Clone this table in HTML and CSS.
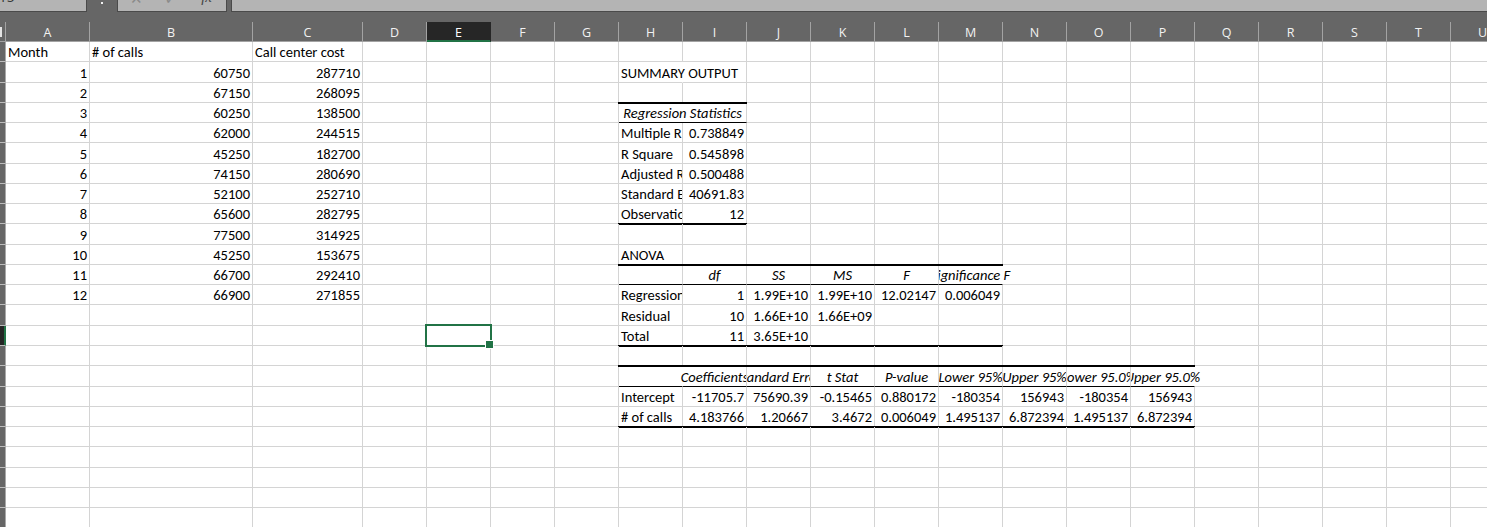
FILE: index.html
```html
<!DOCTYPE html>
<html lang="en">
<head>
<meta charset="utf-8">
<title>Regression output</title>
<link rel="stylesheet" href="styles.css">
</head>
<body>
<div class="bar">
  <div class="namebox"><span>E15</span></div>
  <div class="dots"><span></span></div>
  <div class="fxbox"><span class="ic x">✕</span><span class="ic ok">✓</span><span class="ic fx">fx</span></div>
  <div class="sep"></div>
  <div class="formula"></div>
</div>
<div class="gap"></div>
<div class="hdr">
  <div class="corner"><span></span></div>
  <div>A</div><div>B</div><div>C</div><div>D</div><div class="on">E</div><div>F</div><div>G</div><div>H</div><div>I</div><div>J</div><div>K</div><div>L</div><div>M</div><div>N</div><div>O</div><div>P</div><div>Q</div><div>R</div><div>S</div><div>T</div><div>U</div>
</div>
<div class="sheet">
  <div class="r"><div class="rh"></div><div><span>Month</span></div><div><span># of calls</span></div><div><span>Call center cost</span></div><div></div><div></div><div></div><div></div><div></div><div></div><div></div><div></div><div></div><div></div><div></div><div></div><div></div><div></div><div></div><div></div><div></div><div></div></div>
  <div class="r"><div class="rh"></div><div><span class="n">1</span></div><div><span class="n">60750</span></div><div><span class="n">287710</span></div><div></div><div></div><div></div><div></div><div class="nb"><span class="sr">SUMMARY OUTPUT</span></div><div></div><div></div><div></div><div></div><div></div><div></div><div></div><div></div><div></div><div></div><div></div><div></div><div></div></div>
  <div class="r"><div class="rh"></div><div><span class="n">2</span></div><div><span class="n">67150</span></div><div><span class="n">268095</span></div><div></div><div></div><div></div><div></div><div></div><div></div><div></div><div></div><div></div><div></div><div></div><div></div><div></div><div></div><div></div><div></div><div></div><div></div></div>
  <div class="r"><div class="rh"></div><div><span class="n">3</span></div><div><span class="n">60250</span></div><div><span class="n">138500</span></div><div></div><div></div><div></div><div></div><div class="span2 tt bb"><span class="m i">Regression Statistics</span></div><div></div><div></div><div></div><div></div><div></div><div></div><div></div><div></div><div></div><div></div><div></div><div></div></div>
  <div class="r"><div class="rh"></div><div><span class="n">4</span></div><div><span class="n">62000</span></div><div><span class="n">244515</span></div><div></div><div></div><div></div><div></div><div><span>Multiple R</span></div><div><span class="n">0.738849</span></div><div></div><div></div><div></div><div></div><div></div><div></div><div></div><div></div><div></div><div></div><div></div><div></div></div>
  <div class="r"><div class="rh"></div><div><span class="n">5</span></div><div><span class="n">45250</span></div><div><span class="n">182700</span></div><div></div><div></div><div></div><div></div><div><span>R Square</span></div><div><span class="n">0.545898</span></div><div></div><div></div><div></div><div></div><div></div><div></div><div></div><div></div><div></div><div></div><div></div><div></div></div>
  <div class="r"><div class="rh"></div><div><span class="n">6</span></div><div><span class="n">74150</span></div><div><span class="n">280690</span></div><div></div><div></div><div></div><div></div><div><span>Adjusted R Square</span></div><div><span class="n">0.500488</span></div><div></div><div></div><div></div><div></div><div></div><div></div><div></div><div></div><div></div><div></div><div></div><div></div></div>
  <div class="r"><div class="rh"></div><div><span class="n">7</span></div><div><span class="n">52100</span></div><div><span class="n">252710</span></div><div></div><div></div><div></div><div></div><div><span>Standard Error</span></div><div><span class="n">40691.83</span></div><div></div><div></div><div></div><div></div><div></div><div></div><div></div><div></div><div></div><div></div><div></div><div></div></div>
  <div class="r"><div class="rh"></div><div><span class="n">8</span></div><div><span class="n">65600</span></div><div><span class="n">282795</span></div><div></div><div></div><div></div><div></div><div class="tb"><span>Observations</span></div><div class="tb"><span class="n">12</span></div><div></div><div></div><div></div><div></div><div></div><div></div><div></div><div></div><div></div><div></div><div></div><div></div></div>
  <div class="r"><div class="rh"></div><div><span class="n">9</span></div><div><span class="n">77500</span></div><div><span class="n">314925</span></div><div></div><div></div><div></div><div></div><div></div><div></div><div></div><div></div><div></div><div></div><div></div><div></div><div></div><div></div><div></div><div></div><div></div><div></div></div>
  <div class="r"><div class="rh"></div><div><span class="n">10</span></div><div><span class="n">45250</span></div><div><span class="n">153675</span></div><div></div><div></div><div></div><div></div><div><span>ANOVA</span></div><div></div><div></div><div></div><div></div><div></div><div></div><div></div><div></div><div></div><div></div><div></div><div></div><div></div></div>
  <div class="r"><div class="rh"></div><div><span class="n">11</span></div><div><span class="n">66700</span></div><div><span class="n">292410</span></div><div></div><div></div><div></div><div></div><div class="tt bb"></div><div class="tt bb"><span class="m i">df</span></div><div class="tt bb"><span class="m i">SS</span></div><div class="tt bb"><span class="m i">MS</span></div><div class="tt bb"><span class="m i">F</span></div><div class="tt bb nb"><span class="m i sr">Significance F</span></div><div></div><div></div><div></div><div></div><div></div><div></div><div></div><div></div></div>
  <div class="r"><div class="rh"></div><div><span class="n">12</span></div><div><span class="n">66900</span></div><div><span class="n">271855</span></div><div></div><div></div><div></div><div></div><div><span>Regression</span></div><div><span class="n">1</span></div><div><span class="n">1.99E+10</span></div><div><span class="n">1.99E+10</span></div><div><span class="n">12.02147</span></div><div><span class="n">0.006049</span></div><div></div><div></div><div></div><div></div><div></div><div></div><div></div><div></div></div>
  <div class="r"><div class="rh"></div><div></div><div></div><div></div><div></div><div></div><div></div><div></div><div><span>Residual</span></div><div><span class="n">10</span></div><div><span class="n">1.66E+10</span></div><div><span class="n">1.66E+09</span></div><div></div><div></div><div></div><div></div><div></div><div></div><div></div><div></div><div></div><div></div></div>
  <div class="r"><div class="rh on"></div><div></div><div></div><div></div><div></div><div class="sel"></div><div></div><div></div><div class="tb"><span>Total</span></div><div class="tb"><span class="n">11</span></div><div class="tb"><span class="n">3.65E+10</span></div><div class="tb"></div><div class="tb"></div><div class="tb"></div><div></div><div></div><div></div><div></div><div></div><div></div><div></div><div></div></div>
  <div class="r"><div class="rh"></div><div></div><div></div><div></div><div></div><div></div><div></div><div></div><div></div><div></div><div></div><div></div><div></div><div></div><div></div><div></div><div></div><div></div><div></div><div></div><div></div><div></div></div>
  <div class="r"><div class="rh"></div><div></div><div></div><div></div><div></div><div></div><div></div><div></div><div class="tt bb nb"></div><div class="tt bb"><span class="m i sl">Coefficients</span></div><div class="tt bb"><span class="m i">Standard Error</span></div><div class="tt bb"><span class="m i">t Stat</span></div><div class="tt bb"><span class="m i">P-value</span></div><div class="tt bb"><span class="m i">Lower 95%</span></div><div class="tt bb"><span class="m i">Upper 95%</span></div><div class="tt bb"><span class="m i">Lower 95.0%</span></div><div class="tt bb nb"><span class="m i sr">Upper 95.0%</span></div><div></div><div></div><div></div><div></div><div></div></div>
  <div class="r"><div class="rh"></div><div></div><div></div><div></div><div></div><div></div><div></div><div></div><div><span>Intercept</span></div><div><span class="n">-11705.7</span></div><div><span class="n">75690.39</span></div><div><span class="n">-0.15465</span></div><div><span class="n">0.880172</span></div><div><span class="n">-180354</span></div><div><span class="n">156943</span></div><div><span class="n">-180354</span></div><div><span class="n">156943</span></div><div></div><div></div><div></div><div></div><div></div></div>
  <div class="r"><div class="rh"></div><div></div><div></div><div></div><div></div><div></div><div></div><div></div><div class="tb"><span># of calls</span></div><div class="tb"><span class="n">4.183766</span></div><div class="tb"><span class="n">1.20667</span></div><div class="tb"><span class="n">3.4672</span></div><div class="tb"><span class="n">0.006049</span></div><div class="tb"><span class="n">1.495137</span></div><div class="tb"><span class="n">6.872394</span></div><div class="tb"><span class="n">1.495137</span></div><div class="tb"><span class="n">6.872394</span></div><div></div><div></div><div></div><div></div><div></div></div>
  <div class="r"><div class="rh"></div><div></div><div></div><div></div><div></div><div></div><div></div><div></div><div></div><div></div><div></div><div></div><div></div><div></div><div></div><div></div><div></div><div></div><div></div><div></div><div></div><div></div></div>
  <div class="r"><div class="rh"></div><div></div><div></div><div></div><div></div><div></div><div></div><div></div><div></div><div></div><div></div><div></div><div></div><div></div><div></div><div></div><div></div><div></div><div></div><div></div><div></div><div></div></div>
  <div class="r"><div class="rh"></div><div></div><div></div><div></div><div></div><div></div><div></div><div></div><div></div><div></div><div></div><div></div><div></div><div></div><div></div><div></div><div></div><div></div><div></div><div></div><div></div><div></div></div>
  <div class="r"><div class="rh"></div><div></div><div></div><div></div><div></div><div></div><div></div><div></div><div></div><div></div><div></div><div></div><div></div><div></div><div></div><div></div><div></div><div></div><div></div><div></div><div></div><div></div></div>
  <div class="r"><div class="rh"></div><div></div><div></div><div></div><div></div><div></div><div></div><div></div><div></div><div></div><div></div><div></div><div></div><div></div><div></div><div></div><div></div><div></div><div></div><div></div><div></div><div></div></div>
</div>
</body>
</html>
```

FILE: styles.css
```css
* { box-sizing: border-box; }
html, body { margin: 0; padding: 0; }
body {
  width: 1487px;
  height: 527px;
  overflow: hidden;
  background: #fff;
  color: #000;
  font-family: Carlito, Calibri, Lato, sans-serif;
  font-size: 14.5px;
}

/* formula bar strip (cut off at the top) */
.bar { display: flex; height: 12px; background: #666; }
.namebox {
  width: 87px;
  background: #b4b4b4;
  border-right: 1px solid #4a4a4a;
  border-bottom: 1px solid #4a4a4a;
  overflow: hidden;
  font: 14px "Open Sans", sans-serif;
  color: #333;
}
.namebox span { display: block; line-height: 14px; margin-top: -10px; text-indent: -9px; }
.dots { width: 30px; }
.dots span { display: block; width: 2px; height: 2px; margin: 2px 0 0 14px; background: #f0f0f0; }
.fxbox {
  width: 110px;
  display: flex;
  background: #b4b4b4;
  border: 1px solid #4a4a4a;
  border-top: 0;
  overflow: hidden;
}
.ic { display: block; line-height: 16px; margin-top: -9px; font-family: "DejaVu Sans", sans-serif; font-size: 15px; color: #8a8a8a; }
.ic.x { margin-left: 12px; }
.ic.ok { margin-left: 22px; }
.ic.fx { margin-left: 24px; margin-top: -11px; font-family: "Liberation Serif", serif; font-style: italic; color: #444; }
.sep { width: 4px; }
.formula { flex: 1; background: #b4b4b4; border-left: 1px solid #4a4a4a; border-bottom: 1px solid #4a4a4a; }
.gap { height: 10px; background: #666; }

/* column headers */
.hdr, .r {
  display: grid;
  grid-template-columns: 6px 84px 163px 110px repeat(18, 64px);
}
.hdr {
  height: 20px;
  background: #666;
  font: 12.5px "Open Sans", sans-serif;
  color: #f2f2f2;
}
.hdr > div {
  display: flex;
  align-items: center;
  justify-content: center;
  border-right: 1px solid #a3a3a3;
  border-bottom: 1px solid #a3a3a3;
  padding-top: 1px;
}
.hdr > .corner { justify-content: flex-start; }
.corner span { width: 2px; height: 10px; background: #e4e4e4; }
.hdr > .on {
  background: #262626;
  color: #fff;
  border-right-color: #262626;
  border-bottom-color: #217346;
  box-shadow: inset 0 -1px 0 #217346;
}

/* cells */
.r { height: 20.27px; }
.r > div {
  position: relative;
  display: flex;
  min-width: 0;
  border-right: 1px solid #d4d4d4;
  border-bottom: 1px solid #d4d4d4;
}
.r > .rh { background: #666; border-right-color: #a8a8a8; border-bottom-color: #bdbdbd; }
.r > .rh.on { background: #262626; border-right-color: #217346; box-shadow: inset -1px 0 0 #217346; }
.r > div > span {
  flex: 1 1 auto;
  min-width: 0;
  display: flex;
  align-items: flex-end;
  justify-content: flex-start;
  overflow: hidden;
  white-space: nowrap;
  padding: 0 2px;
  line-height: 17px;
}
.r > div > .n { justify-content: flex-end; }
.r > div > .m { justify-content: center; }
.i { font-style: italic; }
.r > div > .sr { overflow: visible; clip-path: inset(0 -300px 0 0); }
.r > div > .sl { overflow: visible; clip-path: inset(0 0 0 -300px); }
.r > .nb { border-right-color: transparent; }
.r > .bb { border-bottom-color: #000; }
.r > .span2 { grid-column: span 2; }

.tt::before, .tb::after {
  content: "";
  position: absolute;
  left: -1px;
  right: -1px;
  height: 2px;
  background: #000;
}
.tt::before { top: -1px; }
.tb::after { bottom: -2px; }

/* active cell */
.r > .sel { z-index: 1; }
.sel::before {
  content: "";
  position: absolute;
  left: -2px;
  top: -2px;
  right: -2px;
  bottom: -2px;
  border: 2px solid #217346;
}
.sel::after {
  content: "";
  position: absolute;
  right: -4px;
  bottom: -4px;
  width: 7px;
  height: 7px;
  background: #217346;
  border: 1px solid #fff;
}
```
